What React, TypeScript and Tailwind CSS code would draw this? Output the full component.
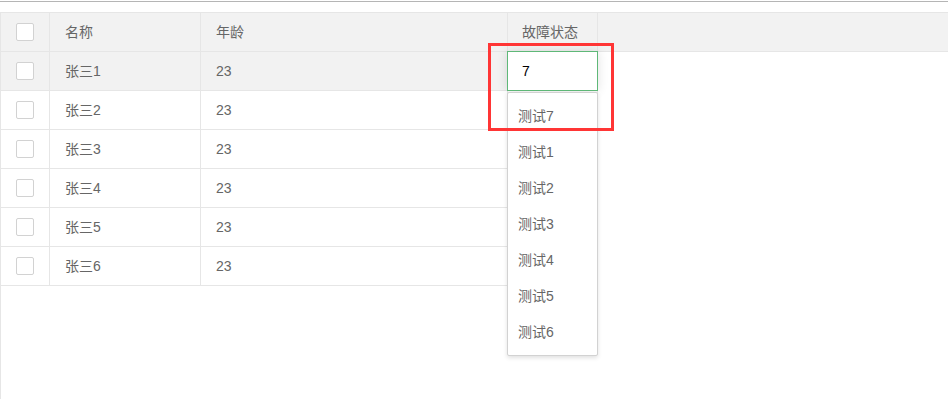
import React from 'react';

const rows = [
  { name: '张三1', age: 23 },
  { name: '张三2', age: 23 },
  { name: '张三3', age: 23 },
  { name: '张三4', age: 23 },
  { name: '张三5', age: 23 },
  { name: '张三6', age: 23 },
];

const options = ['测试7', '测试1', '测试2', '测试3', '测试4', '测试5', '测试6'];

function Checkbox() {
  return <div className="w-[18px] h-[18px] border border-[#d2d2d2] rounded-[2px] bg-white" />;
}

export default function App() {
  return (
    <div
      className="relative w-[948px] h-[399px] bg-white overflow-hidden flex flex-col text-[14px] text-[#666]"
      style={{ fontFamily: '"Liberation Sans", Arial, "Noto Sans CJK SC", sans-serif' }}
    >
      {/* top rule */}
      <div className="mt-px h-px bg-[#b5b5b5] shrink-0" />

      {/* table box */}
      <div className="mt-[10px] flex-1 flex flex-col border-l border-[#e6e6e6]">
        {/* header */}
        <div className="flex h-[40px] bg-[#f2f2f2] border-t border-b border-[#e6e6e6]">
          <div className="w-[49px] flex items-center justify-center border-r border-[#e6e6e6]">
            <Checkbox />
          </div>
          <div className="w-[151px] flex items-center pl-[15px] border-r border-[#e6e6e6]">名称</div>
          <div className="w-[307px] flex items-center pl-[15px] border-r border-[#e6e6e6]">年龄</div>
          <div className="w-[90px] flex items-center pl-[14px] border-r border-[#e6e6e6]">故障状态</div>
          <div className="flex-1" />
        </div>

        {/* body */}
        <div className="w-[597px] flex flex-col">
          {rows.map((r, i) => (
            <div
              key={r.name}
              className={`flex h-[39px] border-b border-[#e6e6e6] ${i === 0 ? 'bg-[#f2f2f2]' : 'bg-white'}`}
            >
              <div className="w-[49px] flex items-center justify-center border-r border-[#e6e6e6]">
                <Checkbox />
              </div>
              <div className="w-[151px] flex items-center pl-[15px] border-r border-[#e6e6e6]">{r.name}</div>
              <div className="w-[307px] flex items-center pl-[15px] border-r border-[#e6e6e6]">{r.age}</div>
              <div className="w-[90px] border-r border-[#e6e6e6]" />
            </div>
          ))}
        </div>
      </div>

      {/* edit input over first status cell */}
      <div className="absolute left-[507px] top-[51px] w-[91px] h-[40px] bg-white border border-[#5fb878] flex items-center pl-[14px] text-black shadow-[0_0_10px_rgba(0,0,0,0.12)]">
        7
      </div>

      {/* dropdown */}
      <div className="absolute left-[507px] top-[92px] w-[91px] h-[264px] bg-white border border-[#d2d2d2] rounded-[2px] py-[5px] shadow-[0_2px_4px_rgba(0,0,0,0.12)]">
        {options.map((o) => (
          <div key={o} className="h-[36px] flex items-center pl-[10px]">
            {o}
          </div>
        ))}
      </div>

      {/* red annotation box */}
      <div className="absolute left-[488px] top-[43px] w-[126px] h-[88px] border-[3px] border-[#ff3535]" />
    </div>
  );
}
